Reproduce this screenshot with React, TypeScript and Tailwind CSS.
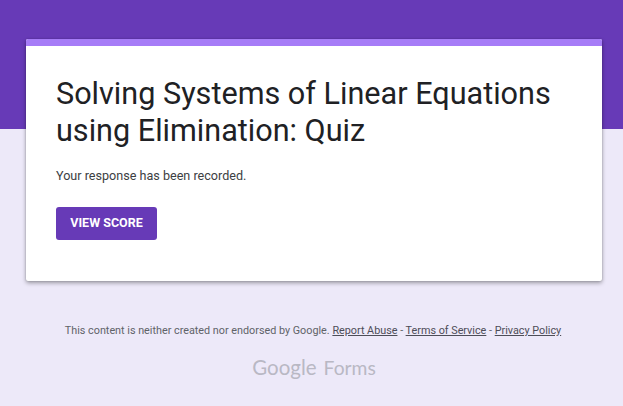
import React from 'react';

const roboto = "font-['Roboto',sans-serif]";

export default function App() {
    return (
        <div className={`h-[406px] overflow-hidden bg-[#ede9f9] ${roboto}`}>
            <div className="h-[129px] bg-[#673ab7]"></div>
            <div className="-mt-[90px] mx-[26px] w-[576px] h-[242px] bg-white rounded-[2px] shadow-[0_2px_4px_rgba(0,0,0,0.35),0_0_2px_rgba(0,0,0,0.2)] overflow-hidden">
                <div className="h-[7px] bg-[#a67cf7]"></div>
                <div className="px-[30px] pt-[29px]">
                    <h1 className="text-[30.6px] leading-[37px] text-[#202124] font-normal">
                        Solving Systems of Linear Equations using Elimination: Quiz
                    </h1>
                    <p className="mt-[18px] text-[12.6px] leading-[18px] text-[#3c4043]">Your response has been recorded.</p>
                    <button className="mt-[22px] flex items-center justify-center w-[101px] h-[33px] rounded-[3px] bg-[#673ab7] text-white text-[12.5px] font-bold">
                        VIEW SCORE
                    </button>
                </div>
            </div>
            <div className="mt-[42px] pl-[3px] text-center text-[10.8px] leading-[16px] text-[#5f6368]">
                This content is neither created nor endorsed by Google.{' '}
                <a className="underline text-[#4d4d58]">Report Abuse</a> -{' '}
                <a className="underline text-[#4d4d58]">Terms of Service</a> -{' '}
                <a className="underline text-[#4d4d58]">Privacy Policy</a>
            </div>
            <div className="mt-[15px] pl-[5px] flex justify-center items-baseline gap-[7px] text-[#b9b8c4] leading-[26px] font-['Lato',sans-serif]">
                <span className="text-[20.5px]">Google</span>
                <span className="text-[19.3px]">Forms</span>
            </div>
        </div>
    );
}
